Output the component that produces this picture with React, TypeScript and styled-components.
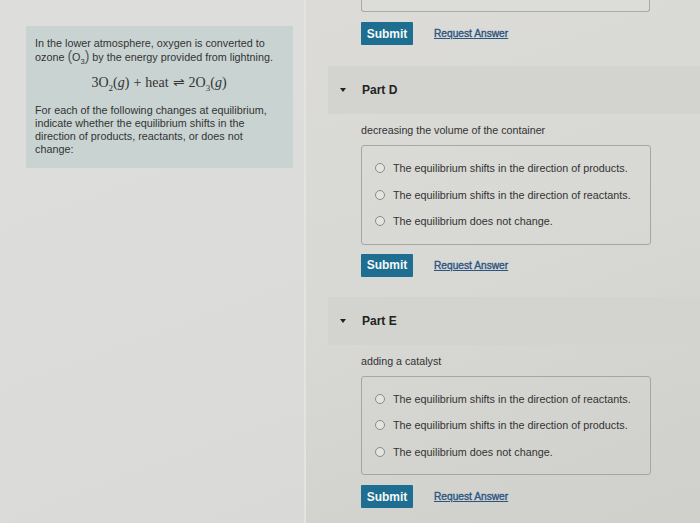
import React from "react";
import styled, { createGlobalStyle } from "styled-components";

const GlobalStyle = createGlobalStyle`
    html, body {
        margin: 0;
        padding: 0;
    }
    body {
        width: 700px;
        height: 523px;
        overflow: hidden;
        font-family: "Liberation Sans", Arial, sans-serif;
        color: #2b2b2b;
        background: linear-gradient(160deg, #dddcd8 0%, #d8d8d4 55%, #cfcfcb 100%);
    }
`;

type Part = {
    label: string;
    prompt: string;
    options: string[];
};

const parts: Part[] = [
    {
        label: "Part D",
        prompt: "decreasing the volume of the container",
        options: [
            "The equilibrium shifts in the direction of products.",
            "The equilibrium shifts in the direction of reactants.",
            "The equilibrium does not change.",
        ],
    },
    {
        label: "Part E",
        prompt: "adding a catalyst",
        options: [
            "The equilibrium shifts in the direction of reactants.",
            "The equilibrium shifts in the direction of products.",
            "The equilibrium does not change.",
        ],
    },
];

function ActionRow({ top }: { top: number }) {
    return (
        <Actions $top={top}>
            <SubmitButton>Submit</SubmitButton>
            <RequestLink href='#'>Request Answer</RequestLink>
        </Actions>
    );
}

export default function App() {
    return (
        <>
            <GlobalStyle />
            <Page>
                <LeftColumn>
                    <InfoBox>
                        <InfoText>
                            In the lower atmosphere, oxygen is converted to
                            <br />
                            ozone <Paren>(</Paren>O<sub>3</sub>
                            <Paren>)</Paren> by the energy provided from
                            lightning.
                        </InfoText>
                        <Equation>
                            3O<sub>2</sub>(<i>g</i>)<Op>+</Op>heat
                            <Op>⇌</Op>2O<sub>3</sub>(<i>g</i>)
                        </Equation>
                        <InfoText>
                            For each of the following changes at equilibrium,
                            indicate whether the equilibrium shifts in the
                            direction of products, reactants, or does not
                            change:
                        </InfoText>
                    </InfoBox>
                </LeftColumn>
                <RightColumn>
                    <AnswerStub />
                    <ActionRow top={10} />
                    {parts.map((part, i) => (
                        <React.Fragment key={part.label}>
                            <PartHeader $top={i === 0 ? 21 : 20}>
                                <Caret />
                                {part.label}
                            </PartHeader>
                            <Prompt>{part.prompt}</Prompt>
                            <Options>
                                {part.options.map((opt) => (
                                    <Option key={opt}>
                                        <Radio />
                                        {opt}
                                    </Option>
                                ))}
                            </Options>
                            <ActionRow top={i === 0 ? 9 : 10} />
                        </React.Fragment>
                    ))}
                </RightColumn>
            </Page>
        </>
    );
}

const Page = styled.div`
    display: grid;
    grid-template-columns: 304px 1fr;
    height: 523px;
`;

const LeftColumn = styled.div`
    padding: 26px 11px 0 26px;
    background: rgba(222, 224, 221, 0.6);
`;

const InfoBox = styled.div`
    background: #c9d3d2;
    padding: 11px 10px 12px 9px;
    min-height: 119px;
`;

const InfoText = styled.p`
    margin: 0;
    max-width: 238px;
    font-size: 10.8px;
    line-height: 13px;
    color: #333;
    sub {
        font-size: 7.5px;
        line-height: 0;
    }
`;

const Paren = styled.span`
    font-size: 14px;
    color: #555;
`;

const Equation = styled.div`
    font-family: "Liberation Serif", "Times New Roman", serif;
    font-size: 14px;
    text-align: center;
    color: #333;
    margin: 11px 0 13px;
    line-height: 16px;
    sub {
        font-size: 9px;
        line-height: 0;
    }
    i {
        font-style: italic;
    }
`;

const Op = styled.span`
    margin: 0 4px;
`;

const RightColumn = styled.div`
    border-left: 2px solid #e3e3df;
    padding-left: 55px;
    display: flex;
    flex-direction: column;
    align-items: flex-start;
`;

const AnswerStub = styled.div`
    width: 287px;
    height: 11px;
    border: 1px solid #a9a9a6;
    border-top: none;
    border-radius: 0 0 3px 3px;
    background: #dcdcd8;
`;

const Actions = styled.div<{ $top: number }>`
    display: flex;
    align-items: center;
    gap: 21px;
    margin-top: ${(p) => p.$top}px;
`;

const SubmitButton = styled.button`
    width: 52px;
    height: 23px;
    border: none;
    border-radius: 1px;
    background: #1d6e90;
    color: #f4f7f8;
    font-family: "Liberation Sans", Arial, sans-serif;
    font-size: 12px;
    font-weight: bold;
    padding: 0;
    cursor: pointer;
`;

const RequestLink = styled.a`
    color: #2c5580;
    font-size: 10.2px;
    -webkit-text-stroke: 0.35px #2c5580;
    text-decoration: underline;
    text-underline-offset: 1px;
`;

const PartHeader = styled.div<{ $top: number }>`
    align-self: stretch;
    margin: ${(p) => p.$top}px 0 0 -33px;
    height: 48px;
    background: #d3d3cf;
    display: flex;
    align-items: center;
    padding-left: 12px;
    gap: 16px;
    font-size: 12px;
    font-weight: bold;
    color: #222;
`;

const Caret = styled.span`
    width: 0;
    height: 0;
    border-left: 3.5px solid transparent;
    border-right: 3.5px solid transparent;
    border-top: 4px solid #222;
`;

const Prompt = styled.div`
    margin-top: 9px;
    font-size: 10.7px;
    line-height: 14px;
    color: #333;
`;

const Options = styled.div`
    margin-top: 8px;
    width: 268px;
    border: 1px solid #a6a6a3;
    border-radius: 3px;
    padding: 9px 10px 9px 10px;
    display: flex;
    flex-direction: column;
`;

const Option = styled.label`
    display: flex;
    align-items: center;
    gap: 8px;
    height: 26.5px;
    padding-left: 3px;
    font-size: 10.8px;
    color: #333;
`;

const Radio = styled.span`
    width: 8px;
    height: 8px;
    border-radius: 50%;
    border: 1px solid #8a8a88;
    background: #e4e4e0;
    flex: none;
`;
